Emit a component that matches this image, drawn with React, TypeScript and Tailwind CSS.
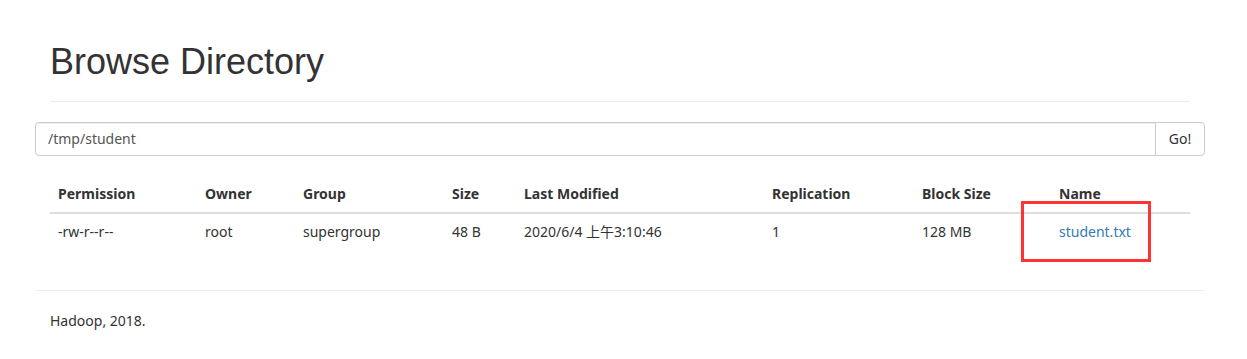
import React from 'react';

const cols = [
  { label: 'Permission', w: 'w-[147px]' },
  { label: 'Owner', w: 'w-[98px]' },
  { label: 'Group', w: 'w-[149px]' },
  { label: 'Size', w: 'w-[72px]' },
  { label: 'Last Modified', w: 'w-[248px]' },
  { label: 'Replication', w: 'w-[150px]' },
  { label: 'Block Size', w: 'w-[137px]' },
  { label: 'Name', w: 'w-[139px]' },
];

const row = ['-rw-r--r--', 'root', 'supergroup', '48 B', '2020/6/4 上午3:10:46', '1', '128 MB'];

function App() {
  return (
    <div className="relative min-h-[359px] bg-white text-[14px] leading-[20px] text-[#333] font-['Noto_Sans','Noto_Sans_CJK_SC',sans-serif]">
      <div className="ml-[35px] w-[1170px] pt-[42px]">
        {/* page header */}
        <div className="mx-[15px] mb-[20px] border-b border-[#eee] pb-[9px]">
          <h1 className="mb-[10px] font-['Liberation_Sans',Arial,sans-serif] text-[36px] leading-[39.6px] text-[#333]">
            Browse Directory
          </h1>
        </div>

        {/* path form */}
        <div className="flex h-[34px]">
          <input
            type="text"
            defaultValue="/tmp/student"
            className="h-[34px] flex-1 rounded-l-[4px] border border-[#ccc] px-[12px] text-[14px] text-[#555] shadow-[inset_0_1px_1px_rgba(0,0,0,0.075)] outline-none"
          />
          <button
            type="button"
            className="-ml-px h-[34px] w-[50px] rounded-r-[4px] border border-[#ccc] bg-white text-[14px] text-[#333]"
          >
            Go!
          </button>
        </div>
        <div className="h-[20px]" />

        {/* listing */}
        <div className="px-[15px] pb-[20px]">
          <table className="w-full table-fixed border-collapse">
            <thead>
              <tr>
                {cols.map((c) => (
                  <th
                    key={c.label}
                    className={`${c.w} border-b-2 border-[#ddd] p-[8px] text-left font-bold`}
                  >
                    {c.label}
                  </th>
                ))}
              </tr>
            </thead>
            <tbody>
              <tr>
                {row.map((v, i) => (
                  <td key={i} className="p-[8px]">
                    {v}
                  </td>
                ))}
                <td className="p-[8px]">
                  <a href="#" className="text-[#337ab7]">
                    student.txt
                  </a>
                </td>
              </tr>
            </tbody>
          </table>
        </div>

        {/* footer */}
        <hr className="my-[20px] border-t border-[#eee]" />
        <p className="px-[15px]">Hadoop, 2018.</p>
      </div>

      {/* annotation box */}
      <div className="pointer-events-none absolute left-[1021px] top-[201px] h-[61px] w-[130px] border-[3px] border-[#f33]" />
    </div>
  );
}

export default App;
